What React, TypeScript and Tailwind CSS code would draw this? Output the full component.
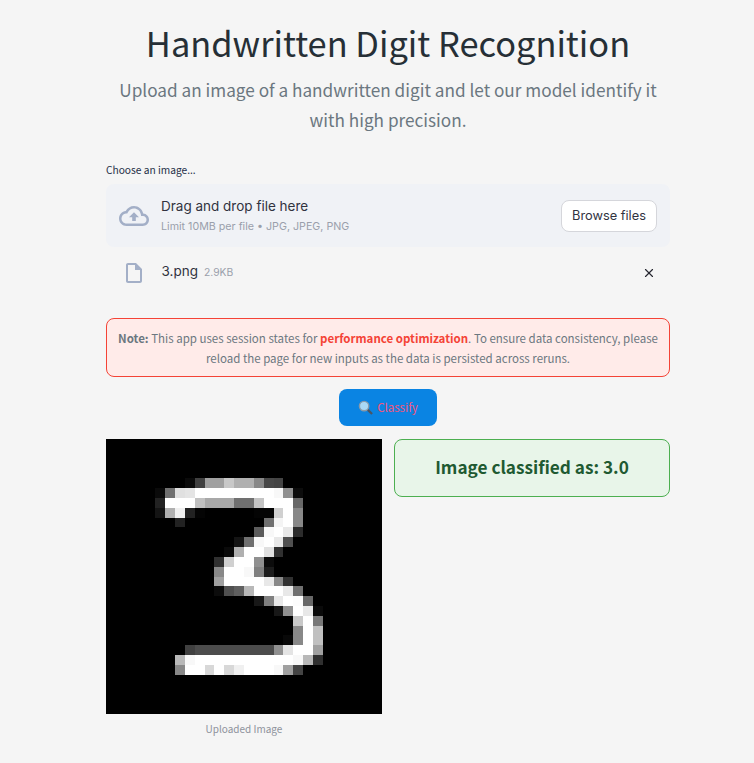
import React from "react";
import { X } from "lucide-react";

// sparse 28x28 grey values of the uploaded digit: [row, first column, values]
const digitRows: [number, number, number[]][] = [
  [4, 8, [0x0a, 0x40, 0xa0, 0xa0, 0xc8, 0xb0, 0xb0, 0x88, 0x48, 0x44]],
  [5, 5, [0x0a, 0x70, 0xe0, 0xe4, 255, 255, 255, 255, 255, 255, 255, 255, 0xf8, 0x90, 0x0c]],
  [6, 5, [0x22, 255, 255, 255, 0xc0, 0xa8, 0xa8, 0xa8, 0x70, 0x70, 0xc4, 255, 255, 255, 0x68]],
  [7, 5, [0x14, 0xb0, 0xf0, 0x22, 0x04]],
  [7, 15, [0x04, 0x04, 0xd0, 255, 0x88]],
  [8, 7, [0x22]],
  [8, 16, [0x70, 0xf4, 255, 0x88]],
  [9, 15, [0x5c, 0xf8, 255, 0xe8, 0x2c]],
  [10, 13, [0x14, 0x70, 0xf8, 255, 0xe8, 0x50]],
  [11, 12, [0x0a, 0xb0, 255, 255, 0xe0, 0x30]],
  [12, 11, [0x30, 0xd0, 255, 255, 0x90, 0x0c]],
  [13, 11, [0x88, 255, 255, 0xf8, 0x80, 0x1c]],
  [14, 11, [0xa0, 255, 255, 255, 255, 0xe8, 0x88, 0x30]],
  [15, 11, [0x0c, 0x50, 0x60, 0xb8, 255, 255, 255, 0xe8, 0x70]],
  [16, 15, [0x18, 0x80, 0xe8, 255, 0xfc, 0x68]],
  [17, 17, [0x18, 0x90, 255, 0xe8, 0x0a]],
  [18, 19, [0xc8, 255, 0x78]],
  [19, 19, [0x88, 255, 0xc0]],
  [20, 18, [0x08, 0x88, 255, 0xc0]],
  [21, 8, [0x40, 0x4c, 0x4c, 0x4c, 0x4c, 0x4c, 0x4c, 0x4c, 0x4c, 0x90, 0xe4, 255, 255, 0xa0]],
  [22, 7, [0xb8, 0xf8, 255, 255, 255, 255, 255, 255, 255, 255, 255, 255, 0xf8, 0xb8, 0x30]],
  [23, 7, [0x88, 255, 255, 0xd8, 255, 0xd8, 0xf0, 255, 255, 255, 0xf8, 0xa0, 0x44]],
];

const sans = "font-['Noto_Sans_CJK_SC','Noto_Sans',sans-serif]";

const DigitImage = () => (
  <svg viewBox="0 0 28 28" preserveAspectRatio="none" className="block h-[275px] w-[276px] bg-black" shapeRendering="crispEdges">
    {digitRows.map(([row, start, values]) =>
      values.map((v, i) => (
        <rect key={`${row}-${start + i}`} x={start + i} y={row} width={1} height={1} fill={`rgb(${v},${v},${v})`} />
      )),
    )}
  </svg>
);

const App = () => {
  return (
    <div className={`min-h-[763px] bg-[#f5f5f5] ${sans}`}>
      <div className="ml-[106px] w-[564px] pt-[18px]">
        <h1 className="text-center text-[34.4px] leading-[48px] font-normal text-[#262f36]">
          Handwritten Digit Recognition
        </h1>
        <p className="mx-auto mt-[9px] w-[560px] text-center text-[17.2px] leading-[30px] text-[#6b7780]">
          Upload an image of a handwritten digit and let our model identify it with high precision.
        </p>

        <label className="mt-[27px] block text-[10.2px] leading-[16px] text-[#262f48]">Choose an image...</label>

        <div className="mt-[6px] flex h-[63px] items-center rounded-lg bg-[#f0f2f6] pr-[13px] pl-[13px]">
          <svg viewBox="0 0 24 24" className="h-[30px] w-[30px] fill-[#a3afc7]">
            <path d="M19.35 10.04C18.67 6.59 15.64 4 12 4 9.11 4 6.6 5.64 5.35 8.04 2.34 8.36 0 10.91 0 14c0 3.31 2.69 6 6 6h13c2.76 0 5-2.24 5-5 0-2.64-2.05-4.78-4.65-4.96zM19 18H6c-2.21 0-4-1.79-4-4 0-2.05 1.53-3.76 3.56-3.97l1.07-.11.5-.95C8.08 7.14 9.94 6 12 6c2.62 0 4.88 1.86 5.39 4.43l.3 1.5 1.53.11c1.56.1 2.78 1.41 2.78 2.96 0 1.65-1.35 3-3 3zM8 13h2.55v3h2.9v-3H16l-4-4z" />
          </svg>
          <div className="ml-[12px] flex-1 pt-[2px] font-['Inter',sans-serif]">
            <div className="text-[13.5px] leading-[20px] text-[#31333f]">Drag and drop file here</div>
            <div className="mt-[1px] text-[10.7px] leading-[20px] text-[#9a9fab]">
              Limit 10MB per file • JPG, JPEG, PNG
            </div>
          </div>
          <button className="h-[32px] w-[96px] rounded-lg border border-[#d5d6db] bg-white font-['Inter',sans-serif] text-[12.8px] text-[#31333f]">
            Browse files
          </button>
        </div>

        <div className="mt-[8px] flex h-[35px] items-center pl-[16px] pr-[14px]">
          <svg viewBox="0 0 24 24" className="h-[24px] w-[24px] fill-[#a3afc7]">
            <path d="M14 2H6c-1.1 0-1.99.9-1.99 2L4 20c0 1.1.89 2 1.99 2H18c1.1 0 2-.9 2-2V8l-6-6zM6 20V4h7v5h5v11H6z" />
          </svg>
          <div className="ml-[15.5px] flex flex-1 items-baseline pb-[2px] font-['Inter',sans-serif]">
            <span className="text-[13.5px] text-[#31333f]">3.png</span>
            <span className="ml-[6px] text-[10.3px] text-[#9a9fab]">2.9KB</span>
          </div>
          <X className="h-[14px] w-[14px] text-[#262730]" strokeWidth={2} />
        </div>

        <div className="mt-[28px] rounded-lg border border-[#f44336] bg-[#ffebe9] px-[8px] pt-[9px] pb-[8px] text-center text-[11.5px] leading-[20px] text-[#6b7780]">
          <strong className="font-bold">Note:</strong> This app uses session states for{" "}
          <strong className="font-bold text-[#f44336]">performance optimization</strong>. To ensure data consistency,
          please reload the page for new inputs as the data is persisted across reruns.
        </div>

        <div className="mt-[12px] flex justify-center">
          <button className="flex h-[37px] w-[98px] items-center justify-center rounded-lg bg-[#0a84e3] text-[11.5px] text-[#f2557a]">
            <svg viewBox="0 0 16 16" className="mr-[4px] h-[15px] w-[15px]">
              <line x1="10" y1="10" x2="15" y2="15" stroke="#4b5563" strokeWidth="2.4" />
              <circle cx="6.5" cy="6.5" r="5" fill="#a9d8f5" stroke="#8a9aa8" strokeWidth="1.5" />
            </svg>
            Classify
          </button>
        </div>

        <div className="mt-[13px] flex gap-[12px]">
          <div className="w-[276px]">
            <DigitImage />
            <div className="mt-[7px] text-center text-[10px] leading-[16px] text-[#8e929c]">Uploaded Image</div>
          </div>
          <div className="flex h-[58px] flex-1 items-center justify-center rounded-lg border border-[#4caf50] bg-[#e8f5e9] pb-[2px] text-[17.2px] font-bold text-[#1f5a32]">
            Image classified as: 3.0
          </div>
        </div>
      </div>
    </div>
  );
};

export default App;
